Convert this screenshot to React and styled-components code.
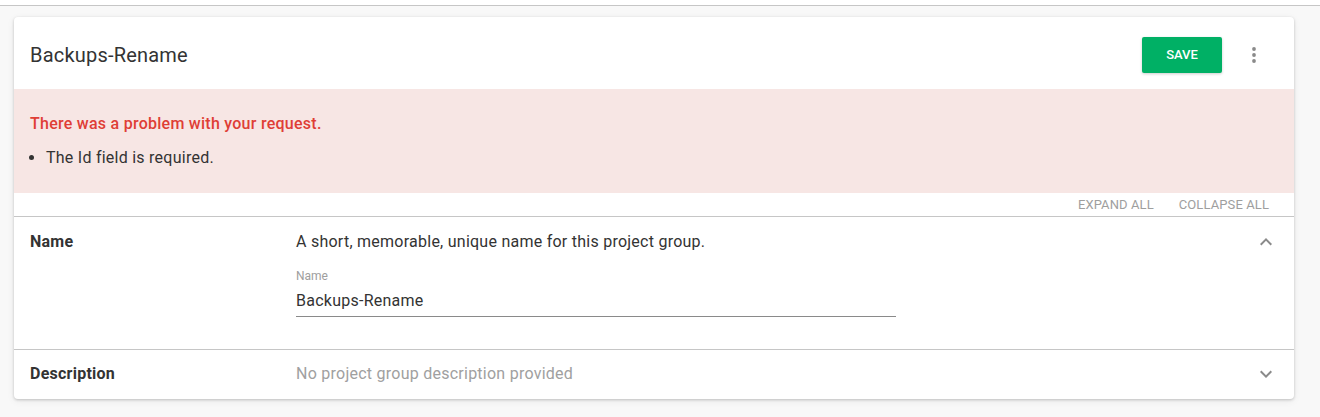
import styled, { createGlobalStyle } from "styled-components";

const GlobalStyle = createGlobalStyle`
  html, body {
    margin: 0;
    padding: 0;
    background: #f8f8f8;
    font-family: Roboto, "Liberation Sans", sans-serif;
  }
  * { box-sizing: border-box; }
`;

const DotsIcon = () => (
  <svg width="24" height="24" viewBox="0 0 24 24" fill="#8a8a8a">
    <circle cx="12" cy="6" r="1.9" />
    <circle cx="12" cy="12" r="1.9" />
    <circle cx="12" cy="18" r="1.9" />
  </svg>
);

const Chevron = ({ up }) => (
  <svg width="24" height="24" viewBox="0 0 24 24" fill="#8a8a8a">
    {up ? (
      <path d="M7.41 15.41 12 10.83l4.59 4.58L18 14l-6-6-6 6z" />
    ) : (
      <path d="M7.41 8.59 12 13.17l4.59-4.58L18 10l-6 6-6-6z" />
    )}
  </svg>
);

const App = () => {
  return (
    <>
      <GlobalStyle />
      <TopRule />
      <Page>
        <Card>
          <Header>
            <Title>Backups-Rename</Title>
            <SaveButton>Save</SaveButton>
            <IconButton>
              <DotsIcon />
            </IconButton>
          </Header>

          <ErrorPanel>
            <ErrorTitle>There was a problem with your request.</ErrorTitle>
            <ErrorList>
              <li>The Id field is required.</li>
            </ErrorList>
          </ErrorPanel>

          <Actions>
            <TextAction>Expand all</TextAction>
            <TextAction>Collapse all</TextAction>
          </Actions>

          <Section>
            <SectionLabel>Name</SectionLabel>
            <SectionBody>
              <Help>A short, memorable, unique name for this project group.</Help>
              <Field>
                <FieldLabel>Name</FieldLabel>
                <FieldInput defaultValue="Backups-Rename" />
              </Field>
            </SectionBody>
            <Toggle>
              <Chevron up />
            </Toggle>
          </Section>

          <Section $last>
            <SectionLabel>Description</SectionLabel>
            <SectionBody>
              <Help $muted>No project group description provided</Help>
            </SectionBody>
            <Toggle>
              <Chevron />
            </Toggle>
          </Section>
        </Card>
      </Page>
    </>
  );
};

export default App;

const TopRule = styled.div`
  height: 6px;
  background: #fff;
  border-bottom: 1px solid #c6c6c6;
`;

const Page = styled.div`
  padding: 11px 26px 20px 14px;
`;

const Card = styled.div`
  background: #fff;
  border-radius: 4px;
  box-shadow: 0 1px 3px rgba(0, 0, 0, 0.2), 0 2px 8px rgba(0, 0, 0, 0.06);
`;

const Header = styled.div`
  display: flex;
  align-items: center;
  height: 72px;
  padding: 3px 22px 0 16px;
`;

const Title = styled.h1`
  flex: 1;
  margin: 0;
  font-size: 20px;
  font-weight: 400;
  letter-spacing: 0.2px;
  color: #333;
`;

const SaveButton = styled.button`
  width: 80px;
  height: 36px;
  border: none;
  border-radius: 2px;
  background: #00b065;
  color: #fff;
  font-family: inherit;
  font-size: 13px;
  font-weight: 500;
  text-transform: uppercase;
  box-shadow: 0 1px 3px rgba(0, 0, 0, 0.2);
  cursor: pointer;
`;

const IconButton = styled.div`
  display: flex;
  align-items: center;
  justify-content: center;
  width: 36px;
  height: 36px;
  margin-left: 14px;
`;

const ErrorPanel = styled.div`
  background: #f7e6e4;
  padding: 25px 16px 25px;
`;

const ErrorTitle = styled.div`
  color: #df3e36;
  font-size: 16px;
  font-weight: 500;
  line-height: 20px;
  letter-spacing: 0.26px;
`;

const ErrorList = styled.ul`
  margin: 14px 0 0;
  padding-left: 16px;
  color: #333;
  font-size: 16px;
  line-height: 20px;
  letter-spacing: 0.25px;
`;

const Actions = styled.div`
  display: flex;
  justify-content: flex-end;
  gap: 25px;
  height: 24px;
  padding: 4px 25px 0 16px;
  border-bottom: 1px solid #c6c6c6;
`;

const TextAction = styled.span`
  font-size: 13px;
  line-height: 16px;
  letter-spacing: 0.1px;
  color: #9e9e9e;
  text-transform: uppercase;
  cursor: pointer;
`;

const Section = styled.div`
  display: flex;
  align-items: flex-start;
  padding: ${(p) => (p.$last ? "12px 16px 13px" : "13px 16px 32px")};
  border-bottom: ${(p) => (p.$last ? "none" : "1px solid #c6c6c6")};
`;

const SectionLabel = styled.div`
  width: 266px;
  font-size: 16px;
  line-height: 24px;
  font-weight: 700;
  letter-spacing: 0.25px;
  color: #333;
`;

const SectionBody = styled.div`
  flex: 1;
`;

const Help = styled.div`
  font-size: 16px;
  line-height: 24px;
  letter-spacing: 0.25px;
  color: ${(p) => (p.$muted ? "#a0a0a0" : "#333")};
`;

const Field = styled.div`
  width: 600px;
  margin-top: 14px;
`;

const FieldLabel = styled.div`
  font-size: 12px;
  line-height: 16px;
  color: #9e9e9e;
`;

const FieldInput = styled.input`
  display: block;
  width: 100%;
  height: 32px;
  margin-top: 1px;
  padding: 0;
  border: none;
  border-bottom: 1px solid #8a8a8a;
  outline: none;
  background: transparent;
  font-family: inherit;
  font-size: 16px;
  letter-spacing: 0.25px;
  color: #333;
`;

const Toggle = styled.div`
  display: flex;
  width: 24px;
  height: 24px;
`;
